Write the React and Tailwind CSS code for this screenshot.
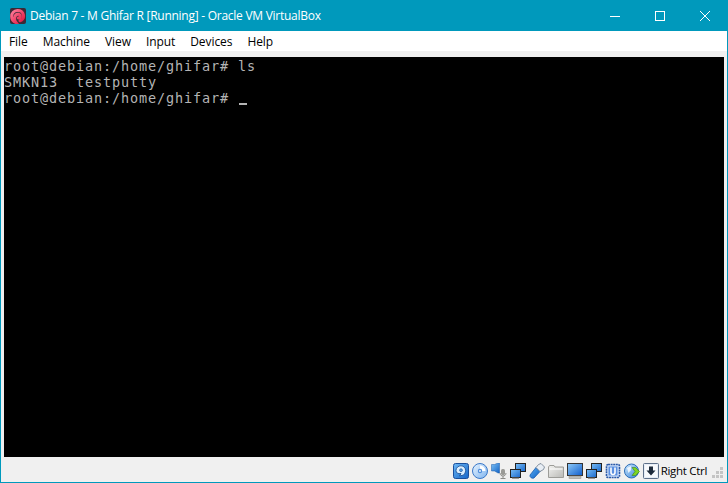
import React from 'react';

const menus = ['File', 'Machine', 'View', 'Input', 'Devices', 'Help'];

const DebianIcon = () => (
    <svg width="16" height="16" viewBox="0 0 16 16">
        <defs>
            <linearGradient id="deb" x1="0" y1="0" x2="1" y2="1">
                <stop offset="0" stopColor="#ff7d9b" />
                <stop offset="1" stopColor="#e2143f" />
            </linearGradient>
        </defs>
        <rect width="16" height="16" rx="2" fill="#3b2a36" />
        <path d="M10 12.8C12.8 11.8 13.9 9.5 13.5 7.1C13 4 10.3 2.2 7.4 2.4C4 2.6 1.8 5.1 1.7 8.2C1.6 11 3.2 13.5 6 14.5C4.7 12.8 4.3 11 4.8 9.2C5.3 7.2 7 6 8.7 6.3C10 6.6 10.6 7.8 10.2 9C9.9 9.8 9.2 10.2 8.4 10" fill="none" stroke="url(#deb)" strokeWidth="3" strokeLinecap="round" />
    </svg>
);

const Minimize = () => (
    <svg width="10" height="10" viewBox="0 0 10 10"><rect x="0" y="5" width="10" height="1" fill="#fff" /></svg>
);

const Maximize = () => (
    <svg width="10" height="10" viewBox="0 0 10 10"><rect x="0.5" y="0.5" width="9" height="9" fill="none" stroke="#fff" /></svg>
);

const Close = () => (
    <svg width="10" height="10" viewBox="0 0 10 10"><path d="M0 0L10 10M10 0L0 10" stroke="#fff" strokeWidth="1" /></svg>
);

const Grad = ({ id, from, to }) => (
    <linearGradient id={id} x1="0" y1="0" x2="1" y2="1">
        <stop offset="0" stopColor={from} />
        <stop offset="1" stopColor={to} />
    </linearGradient>
);

// status bar icons, VirtualBox style
const Hd = () => (
    <svg width="16" height="16" viewBox="0 0 16 16">
        <defs><Grad id="hd" from="#6db8f5" to="#1565c8" /></defs>
        <rect x="0.5" y="0.5" width="15" height="15" rx="2" fill="url(#hd)" stroke="#1a4f9c" />
        <path d="M3 7.5C3 4.5 5.5 2.8 8 2.8C10.8 2.8 12.6 5 12.6 7.5C12.6 9.5 11.5 11 10.5 12L6.5 13L8 10.5C5 11 3 10 3 7.5Z" fill="#dcefff" stroke="#12488f" strokeWidth="0.8" />
        <circle cx="8" cy="7.2" r="1.4" fill="#5aa7ee" stroke="#12488f" strokeWidth="0.6" />
    </svg>
);

const Cd = () => (
    <svg width="16" height="16" viewBox="0 0 16 16">
        <defs><Grad id="cd" from="#e8f4ff" to="#7fb4ee" /></defs>
        <circle cx="8" cy="8" r="7.5" fill="url(#cd)" stroke="#3a78c8" />
        <path d="M8 2.5A5.5 5.5 0 0 1 13.5 8L10 8A2 2 0 0 0 8 6Z" fill="#fff" />
        <circle cx="8" cy="8" r="2.2" fill="#4f8edb" />
        <circle cx="8" cy="8" r="0.9" fill="#fff" />
    </svg>
);

const Audio = () => (
    <svg width="16" height="16" viewBox="0 0 16 16">
        <defs><Grad id="au" from="#7cc2f7" to="#1463c4" /></defs>
        <path d="M0.5 1.5L3.5 1.5L7 0L8.5 0L8.5 10L7 10L3.5 8L0.5 8Z" fill="url(#au)" stroke="#1a5aa8" strokeWidth="0.5" />
        <rect x="10" y="6" width="4" height="6" rx="1.5" fill="#9a9a96" />
        <path d="M9 10C9 12 10.5 13 12 13C13.5 13 15 12 15 10M12 13L12 15M9.5 15.5L14.5 15.5" fill="none" stroke="#8c8c88" />
    </svg>
);

const Net = () => (
    <svg width="16" height="16" viewBox="0 0 16 16">
        <defs><Grad id="net" from="#78bdf6" to="#1a68cc" /></defs>
        <rect x="5.5" y="0.5" width="10" height="8" fill="url(#net)" stroke="#222" />
        <rect x="0.5" y="6.5" width="10" height="8" fill="url(#net)" stroke="#222" />
        <rect x="2" y="14" width="7" height="1.5" fill="#444" />
    </svg>
);

const Usb = () => (
    <svg width="16" height="16" viewBox="0 0 16 16">
        <defs><Grad id="usb" from="#58aef3" to="#0f5fc4" /></defs>
        <path d="M1 12L7 4.5L11 8.5L5 15C3 15.8 0.5 14.5 1 12Z" fill="url(#usb)" stroke="#1b5cae" strokeWidth="0.8" />
        <path d="M9.5 1.5L12 0.5L15.5 4L14.5 6.5L11 8.5L7 4.5Z" fill="#e8eef5" stroke="#6a7a8c" strokeWidth="0.8" />
    </svg>
);

const Folder = () => (
    <svg width="16" height="16" viewBox="0 0 16 16">
        <defs><Grad id="fo" from="#f2f2f0" to="#b9b9b6" /></defs>
        <path d="M0.5 4L1.5 2.5L6 2.5L7 4L15.5 4L15.5 14.5L0.5 14.5Z" fill="url(#fo)" stroke="#9c9c98" />
        <path d="M1.5 6L14.5 6" stroke="#fff" />
    </svg>
);

const Display = () => (
    <svg width="16" height="16" viewBox="0 0 16 16">
        <defs><Grad id="di" from="#8fcbf9" to="#0f5ccb" /></defs>
        <rect x="0.5" y="0.5" width="15" height="12" fill="url(#di)" stroke="#333" />
        <rect x="2" y="13" width="12" height="2.5" fill="#bdbdb9" stroke="#8a8a86" strokeWidth="0.5" />
    </svg>
);

const Chip = () => (
    <svg width="16" height="16" viewBox="0 0 16 16">
        <rect x="1.5" y="1.5" width="13" height="13" rx="1.5" fill="#cfe0fa" stroke="#2c5aa8" strokeWidth="1.6" strokeDasharray="2 0.6" />
        <rect x="3.5" y="3.5" width="9" height="9" fill="#5b8fe0" />
        <path d="M6 4.5L6 9.5A2 2 0 0 0 10 9.5L10 4.5" fill="none" stroke="#fff" strokeWidth="1.6" />
    </svg>
);

const Globe = () => (
    <svg width="16" height="16" viewBox="0 0 16 16">
        <defs><Grad id="gl" from="#d3ecff" to="#2f7fd8" /></defs>
        <circle cx="7.5" cy="8" r="7" fill="url(#gl)" stroke="#2b6cb5" />
        <path d="M3 5L7 3L7 7L4.5 10Z" fill="#fff" opacity="0.8" />
        <path d="M8 4.5L11.5 4.5L15.5 8.5L11.5 12.5L8 12.5L11 8.5Z" fill="#7ed321" stroke="#3e8a12" strokeWidth="0.6" />
    </svg>
);

const Capture = () => (
    <svg width="16" height="16" viewBox="0 0 16 16">
        <rect x="0.5" y="0.5" width="15" height="15" rx="1" fill="#e6edf6" stroke="#5d6f88" />
        <rect x="2" y="2" width="12" height="12" fill="#f7f9fc" />
        <path d="M6 3.5L10 3.5L10 7.5L12.5 7.5L8 12.5L3.5 7.5L6 7.5Z" fill="#1d2a3a" />
    </svg>
);

const statusIcons = [Hd, Cd, Audio, Net, Usb, Folder, Display, Net, Chip, Globe, Capture];

// lower-right resize grip
const Grip = () => (
    <svg width="12" height="12" viewBox="0 0 12 12" className="absolute right-[3px] bottom-[3px]">
        <path d="M8 0h3v3h-3zM4 4h3v3h-3zM8 4h3v3h-3zM0 8h3v3h-3zM4 8h3v3h-3zM8 8h3v3h-3z" fill="#c4c4c4" />
    </svg>
);

const App = () => {
    return (
        <div className="w-[728px] h-[483px] flex flex-col overflow-hidden border-x border-b border-[#0099bc] bg-[#f0f0f0] font-['Open_Sans','Noto_Sans',sans-serif]">
            <div className="h-[31px] shrink-0 flex items-center bg-[#0099bc] pl-[9px] text-white">
                <DebianIcon />
                <span className="ml-[4px] text-[12px] leading-none tracking-[-0.26px]">Debian 7 - M Ghifar R [Running] - Oracle VM VirtualBox</span>
                <div className="ml-auto flex">
                    <div className="w-[45px] h-[31px] flex items-center justify-center"><Minimize /></div>
                    <div className="w-[45px] h-[31px] flex items-center justify-center"><Maximize /></div>
                    <div className="w-[45px] h-[31px] flex items-center justify-center"><Close /></div>
                </div>
            </div>

            <div className="h-[20px] shrink-0 flex items-center bg-white pl-[8px] pt-[1px] gap-[15px] text-[12px] tracking-[-0.07px] text-black">
                {menus.map((m) => <span key={m}>{m}</span>)}
            </div>

            <div className="h-[6px] shrink-0" />

            <div className="mx-[3px] h-[400px] shrink-0 pt-[1px] bg-black text-[#b4b4b4] font-['DejaVu_Sans_Mono',monospace] text-[13.5px] leading-[16px] tracking-[0.87px] whitespace-pre">
                <div>root@debian:/home/ghifar# ls</div>
                <div>SMKN13  testputty</div>
                <div className="flex items-end">root@debian:/home/ghifar# <span className="inline-block w-[8px] h-[2px] ml-[1px] mb-[1px] bg-[#b4b4b4]" /></div>
            </div>

            <div className="relative flex-1 flex items-center justify-end pr-[20px] pt-[2px]">
                <div className="flex items-center gap-[3px]">
                    {statusIcons.map((Icon, i) => <Icon key={i} />)}
                </div>
                <span className="ml-[2px] text-[11.5px] tracking-[-0.3px] text-black">Right Ctrl</span>
                <Grip />
            </div>
        </div>
    );
};

export default App;
